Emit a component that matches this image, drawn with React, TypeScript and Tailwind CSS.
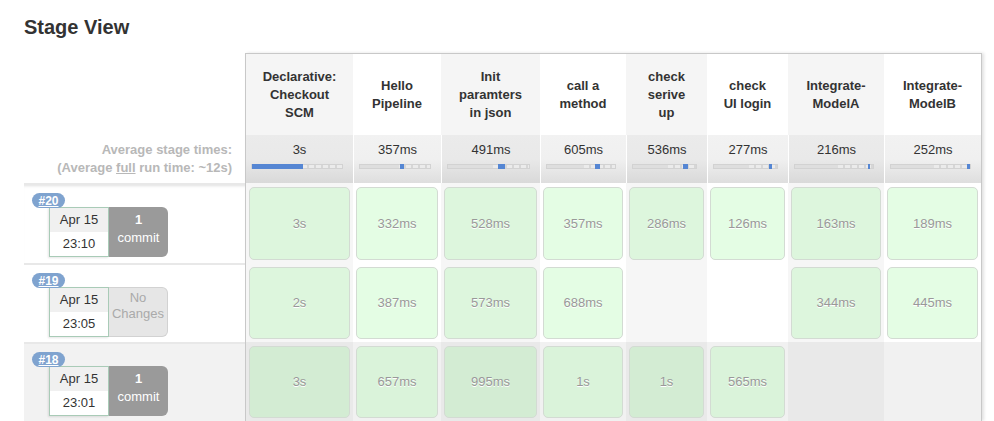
import React from "react";

type Stage = {
  name: string[];
  w: string;
  avg: string;
  blue: [number, number];
};

const stages: Stage[] = [
  { name: ["Declarative:", "Checkout", "SCM"], w: "w-[107px]", avg: "3s", blue: [0, 56.5] },
  { name: ["Hello", "Pipeline"], w: "w-[88px]", avg: "357ms", blue: [57.5, 5] },
  { name: ["Init", "paramters", "in json"], w: "w-[99px]", avg: "491ms", blue: [62, 8] },
  { name: ["call a", "method"], w: "w-[86px]", avg: "605ms", blue: [70, 8.5] },
  { name: ["check", "serive", "up"], w: "w-[81px]", avg: "536ms", blue: [80, 7.5] },
  { name: ["check", "UI login"], w: "w-[81px]", avg: "277ms", blue: [88, 4.5] },
  { name: ["Integrate-", "ModelA"], w: "w-[96px]", avg: "216ms", blue: [93, 3.7] },
  { name: ["Integrate-", "ModelB"], w: "w-[97px]", avg: "252ms", blue: [96.3, 3.7] },
];

type Run = {
  id: string;
  date: string;
  time: string;
  commits: number;
  h: string;
  times: (string | null)[];
  highlight?: boolean;
};

const runs: Run[] = [
  {
    id: "#20",
    date: "Apr 15",
    time: "23:10",
    commits: 1,
    h: "h-[80px]",
    times: ["3s", "332ms", "528ms", "357ms", "286ms", "126ms", "163ms", "189ms"],
  },
  {
    id: "#19",
    date: "Apr 15",
    time: "23:05",
    commits: 0,
    h: "h-[79px]",
    times: ["2s", "387ms", "573ms", "688ms", null, null, "344ms", "445ms"],
  },
  {
    id: "#18",
    date: "Apr 15",
    time: "23:01",
    commits: 1,
    h: "h-[79px]",
    times: ["3s", "657ms", "995ms", "1s", "1s", "565ms", null, null],
    highlight: true,
  },
];

function TimeBar({ blue }: { blue: [number, number] }) {
  return (
    <div className="relative h-[5px] w-full border border-[#d2d2d2] bg-[#dedede]">
      <div className="absolute top-0 right-0 h-full w-[45%] bg-[repeating-linear-gradient(90deg,#ebebeb_0_5px,#d6d6d6_5px_7px)]" />
      <div
        className="absolute top-[-1px] h-[5px] bg-[#5586d3]"
        style={{ left: `${blue[0]}%`, width: `${blue[1]}%` }}
      />
    </div>
  );
}

function RunLabel({ run, first }: { run: Run; first: boolean }) {
  return (
    <div
      className={`relative ${run.h} border-t-2 border-[#e8e8e8] pl-[25px] pt-[22px] ${
        run.highlight ? "bg-[#f2f2f2]" : "bg-white"
      } ${first ? "shadow-[inset_0_3px_3px_-2px_rgba(0,0,0,0.12)]" : ""}`}
    >
      <span className="absolute left-[8px] top-[8px] z-10 flex h-[15px] w-[33px] items-center justify-center rounded-full bg-[#7fa3cf] text-[12px] font-bold leading-none text-white underline">
        {run.id}
      </span>
      <div className="flex h-[50px]">
        <div className="flex w-[60px] flex-col border border-[#a9cbb7] text-[13px] text-[#333] shadow-[-1px_1px_2px_rgba(0,0,0,0.1)]">
          <div className="flex h-[24px] items-center justify-center bg-[#f0f0f0]">{run.date}</div>
          <div className="flex flex-1 items-center justify-center bg-white">{run.time}</div>
        </div>
        {run.commits > 0 ? (
          <div className="flex w-[59px] flex-col items-center rounded-r-[6px] bg-[#9a9a9a] pt-[4px] text-[13px] leading-[18px] text-white">
            <span className="font-bold">{run.commits}</span>
            <span>commit</span>
          </div>
        ) : (
          <div className="flex w-[59px] flex-col items-center rounded-r-[6px] border border-l-0 border-[#d2d2d2] bg-[#e6e6e6] pt-[2px] text-[13px] leading-[16px] text-[#aaa]">
            <span>No</span>
            <span>Changes</span>
          </div>
        )}
      </div>
    </div>
  );
}

export default function App() {
  return (
    <div className="min-h-[421px] bg-white pl-[24px] font-['Liberation_Sans',Arial,sans-serif] text-[#333]">
      <h1 className="mb-[14px] pt-[15px] text-[20px] font-bold leading-[24px] text-[#333]">Stage View</h1>

      <div className="flex">
        {/* left labels */}
        <div className="w-[221px]">
          <div className="h-[82px]" />
          <div className="flex h-[48px] flex-col items-end justify-start pr-[13px] pt-[6px] text-[13px] font-bold leading-[18px] text-[#b8b8b8]">
            <span>Average stage times:</span>
            <span>
              (Average <span className="underline">full</span> run time: ~12s)
            </span>
          </div>
          {runs.map((r, i) => (
            <RunLabel key={r.id} run={r} first={i === 0} />
          ))}
        </div>

        {/* stage table */}
        <div className="w-[737px] border-x border-t border-[#c8c8c8] shadow-[2px_0_3px_rgba(0,0,0,0.12)]">
          <div className="flex h-[81px]">
            {stages.map((s, i) => (
              <div
                key={i}
                className={`${s.w} flex flex-col items-center justify-center text-center text-[13px] font-bold leading-[18px] text-[#333] ${
                  i % 2 === 0 ? "bg-[#f5f5f5]" : "bg-white"
                }`}
              >
                {s.name.map((l) => (
                  <span key={l}>{l}</span>
                ))}
              </div>
            ))}
          </div>

          <div className="flex h-[48px]">
            {stages.map((s, i) => (
              <div
                key={i}
                className={`${s.w} flex flex-col items-center pl-[5px] pr-[10px] pt-[7px] ${
                  i > 0 ? "border-l border-white" : ""
                } ${
                  i % 2 === 0
                    ? "bg-linear-to-b from-[#ebebeb] via-[#e9e9e9] to-[#d9d9d9]"
                    : "bg-linear-to-b from-[#f2f2f2] via-[#f0f0f0] to-[#dedede]"
                }`}
              >
                <span className="pl-[5px] text-[13px] leading-[16px] text-[#333]">{s.avg}</span>
                <div className="mt-[6px] w-full">
                  <TimeBar blue={s.blue} />
                </div>
              </div>
            ))}
          </div>

          {runs.map((r) => (
            <div key={r.id} className={`flex ${r.h}`}>
              {stages.map((s, i) => {
                const odd = i % 2 === 0;
                const colBg = r.highlight
                  ? odd
                    ? "bg-[#e9e9e9]"
                    : "bg-[#f1f1f1]"
                  : odd
                  ? "bg-[#f6f6f6]"
                  : "bg-white";
                const cellBg = r.highlight
                  ? odd
                    ? "bg-[#d3ecd3]"
                    : "bg-[#daf3da]"
                  : odd
                  ? "bg-[#ddf6dd]"
                  : "bg-[#e4fde4]";
                const t = r.times[i];
                return (
                  <div key={i} className={`${s.w} ${colBg} px-[3px] pb-[3px] pt-[4px]`}>
                    {t && (
                      <div
                        className={`flex h-full items-center justify-center rounded-[5px] border border-[#d3dbd3] ${cellBg} text-[13px] text-[#999] [text-shadow:0_1px_0_#fff]`}
                      >
                        {t}
                      </div>
                    )}
                  </div>
                );
              })}
            </div>
          ))}
        </div>
      </div>
    </div>
  );
}
